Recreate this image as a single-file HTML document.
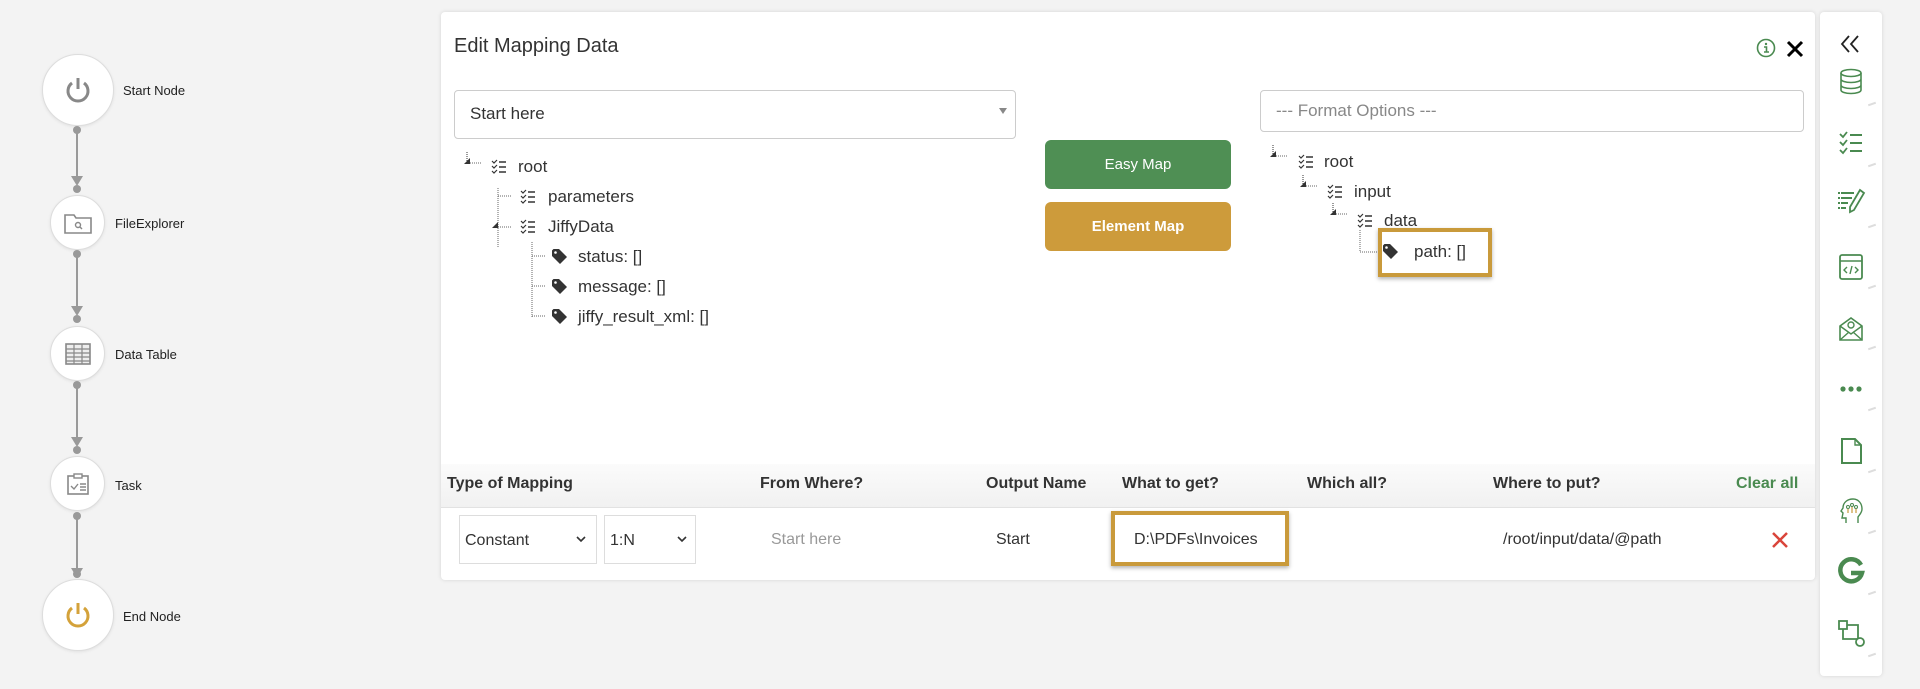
<!DOCTYPE html>
<html><head><meta charset="utf-8"><style>
*{box-sizing:border-box;margin:0;padding:0}
body{width:1920px;height:689px;background:#f3f3f3;font-family:"Liberation Sans",sans-serif;color:#333;position:relative;overflow:hidden}
.a{position:absolute}
.node{position:absolute;border-radius:50%;background:#fff;border:1px solid #ddd;box-shadow:0 1px 3px rgba(0,0,0,.08);display:flex;align-items:center;justify-content:center}
.lbl{position:absolute;font-size:13px;color:#222}
.vl{position:absolute;width:2px;background:#999;left:76px}
.dot{position:absolute;width:8px;height:8px;border-radius:50%;background:#999;left:73px}
.arr{position:absolute;left:71px;width:0;height:0;border-left:6px solid transparent;border-right:6px solid transparent;border-top:10px solid #999}
.modal{position:absolute;left:441px;top:12px;width:1374px;height:568px;background:#fff;border-radius:4px;box-shadow:0 0 4px rgba(0,0,0,.12)}
.t{position:absolute;font-size:17px;color:#333;white-space:nowrap;line-height:20px}
.hd{position:absolute;font-size:16px;font-weight:bold;color:#333;top:475px;white-space:nowrap}
.side{position:absolute;left:1820px;top:12px;width:62px;height:664px;background:#fff;border-radius:4px;box-shadow:0 0 4px rgba(0,0,0,.12)}
.si{position:absolute;left:1836px;width:30px;height:30px}
.sep{position:absolute;left:1868px;width:8px;height:2px;background:#ddd;transform:rotate(-20deg)}
</style></head><body>

<div class="node" style="left:42px;top:54px;width:72px;height:72px"><svg width="30" height="30" viewBox="0 0 30 30"><path d="M9 8 A10 10 0 1 0 21 8" fill="none" stroke="#888" stroke-width="3"/><line x1="15" y1="3" x2="15" y2="14" stroke="#888" stroke-width="3"/></svg></div>
<div class="lbl" style="left:123px;top:83px">Start Node</div>
<div class="dot" style="top:126px"></div><div class="vl" style="top:130px;height:50px"></div><div class="arr" style="top:176px"></div><div class="dot" style="top:185px"></div>
<div class="node" style="left:50px;top:195px;width:55px;height:55px"><svg width="28" height="22" viewBox="0 0 28 22"><path d="M1 3h9l2 3h15v15H1z" fill="none" stroke="#888" stroke-width="1.6"/><circle cx="14" cy="13" r="2.5" fill="none" stroke="#888" stroke-width="1.4"/><line x1="16" y1="15" x2="18" y2="17" stroke="#888" stroke-width="1.4"/></svg></div>
<div class="lbl" style="left:115px;top:216px">FileExplorer</div>
<div class="dot" style="top:250px"></div><div class="vl" style="top:254px;height:56px"></div><div class="arr" style="top:306px"></div><div class="dot" style="top:315px"></div>
<div class="node" style="left:50px;top:326px;width:55px;height:55px"><svg width="26" height="22" viewBox="0 0 26 22"><rect x="1" y="1" width="24" height="20" fill="#eee" stroke="#888" stroke-width="1.6"/><path d="M1 6h24M1 10h24M1 14h24M1 18h24M9 1v20M17 1v20" stroke="#888" stroke-width="1.2"/></svg></div>
<div class="lbl" style="left:115px;top:347px">Data Table</div>
<div class="dot" style="top:381px"></div><div class="vl" style="top:385px;height:56px"></div><div class="arr" style="top:437px"></div><div class="dot" style="top:446px"></div>
<div class="node" style="left:50px;top:456px;width:55px;height:55px"><svg width="24" height="24" viewBox="0 0 24 24"><rect x="2" y="4" width="20" height="18" fill="none" stroke="#888" stroke-width="1.6"/><rect x="8" y="2" width="8" height="4" fill="#fff" stroke="#888" stroke-width="1.4"/><path d="M5 14l3 3 4-5M14 12h6M14 15h6M14 18h6" fill="none" stroke="#888" stroke-width="1.4"/></svg></div>
<div class="lbl" style="left:115px;top:478px">Task</div>
<div class="dot" style="top:512px"></div><div class="vl" style="top:516px;height:56px"></div><div class="arr" style="top:568px"></div><div class="dot" style="top:570px"></div>
<div class="node" style="left:42px;top:579px;width:72px;height:72px"><svg width="30" height="30" viewBox="0 0 30 30"><path d="M9 8 A10 10 0 1 0 21 8" fill="none" stroke="#d4a23a" stroke-width="3"/><line x1="15" y1="3" x2="15" y2="14" stroke="#d4a23a" stroke-width="3"/></svg></div>
<div class="lbl" style="left:123px;top:609px">End Node</div>

<div class="modal"></div>
<div class="t" style="left:454px;top:36px;font-size:20px;color:#333">Edit Mapping Data</div>
<svg class="a" style="left:1756px;top:38px" width="20" height="20" viewBox="0 0 20 20"><circle cx="10" cy="10" r="8.5" fill="none" stroke="#4a8a50" stroke-width="1.6"/><circle cx="10" cy="6" r="1.2" fill="#4a8a50"/><path d="M8 9h2.5v5M8 14h5" stroke="#4a8a50" stroke-width="1.6" fill="none"/></svg>
<svg class="a" style="left:1786px;top:40px" width="18" height="18" viewBox="0 0 18 18"><path d="M2 2L16 16M16 2L2 16" stroke="#000" stroke-width="3"/></svg>

<div class="a" style="left:454px;top:90px;width:562px;height:49px;border:1px solid #ccc;border-radius:4px"></div>
<div class="t" style="left:470px;top:104px">Start here</div>
<div class="a" style="left:999px;top:108px;border-left:4px solid transparent;border-right:4px solid transparent;border-top:6px solid #888"></div>

<div class="a" style="left:1260px;top:90px;width:544px;height:42px;border:1px solid #ccc;border-radius:4px"></div>
<div class="t" style="left:1276px;top:101px;color:#888">--- Format Options ---</div>

<div class="a" style="left:1045px;top:140px;width:186px;height:49px;background:#4f8f54;border-radius:6px;color:#fff;font-size:15px;text-align:center;line-height:49px">Easy Map</div>
<div class="a" style="left:1045px;top:202px;width:186px;height:49px;background:#cd9b3b;border-radius:6px;color:#fff;font-size:15px;font-weight:bold;text-align:center;line-height:49px">Element Map</div>

<svg width="0" height="0" style="position:absolute"><defs>
<g id="lst"><path d="M0 2l2 2 3-3M0 7l2 2 3-3M0 12l2 2 3-3" fill="none" stroke="#333" stroke-width="1.2"/><path d="M7 3h7M7 8h7M7 13h7" stroke="#333" stroke-width="1.5"/></g>
<g id="tag"><path d="M0 1.5V7l8 8 7-7-8-8H1.5z" fill="#333"/><circle cx="3.5" cy="3.5" r="1.3" fill="#fff"/></g>
<g id="exp"><path d="M3 0v11" stroke="#333" stroke-width="1" stroke-dasharray="1 1"/><path d="M0 12l6-6v6z" fill="#333"/><path d="M6 11h12" stroke="#666" stroke-width="1" stroke-dasharray="1 1"/></g>
</defs></svg>

<svg class="a" style="left:460px;top:150px" width="400" height="180">
<use href="#exp" x="4" y="2"/><use href="#lst" x="32" y="9"/>
<path d="M38 38v60M38 46h14" stroke="#666" stroke-dasharray="1 1" fill="none"/>
<use href="#lst" x="61" y="39"/>
<path d="M32 78l6-6v6z" fill="#333"/><path d="M38 77h14" stroke="#666" stroke-dasharray="1 1"/>
<use href="#lst" x="61" y="69"/>
<path d="M72 92v76M72 106h14M72 136h14M72 166h14" stroke="#666" stroke-dasharray="1 1" fill="none"/>
<use href="#tag" x="92" y="99"/><use href="#tag" x="92" y="129"/><use href="#tag" x="92" y="159"/>
</svg>
<div class="t" style="left:518px;top:157px">root</div>
<div class="t" style="left:548px;top:187px">parameters</div>
<div class="t" style="left:548px;top:217px">JiffyData</div>
<div class="t" style="left:578px;top:247px">status: []</div>
<div class="t" style="left:578px;top:277px">message: []</div>
<div class="t" style="left:578px;top:307px">jiffy_result_xml: []</div>

<svg class="a" style="left:1268px;top:144px" width="200" height="130">
<use href="#exp" x="2" y="1"/><use href="#lst" x="31" y="10"/>
<use href="#exp" x="32" y="31"/><use href="#lst" x="60" y="40"/>
<use href="#exp" x="62" y="59"/><use href="#lst" x="90" y="69"/>
<path d="M92 86v22h18" stroke="#666" stroke-dasharray="1 1" fill="none"/>
<use href="#tag" x="115" y="100"/>
</svg>
<div class="t" style="left:1324px;top:152px">root</div>
<div class="t" style="left:1354px;top:182px">input</div>
<div class="t" style="left:1384px;top:211px">data</div>
<div class="a" style="left:1378px;top:228px;width:114px;height:49px;border:4px solid #c99a3b;box-shadow:0 2px 4px rgba(0,0,0,.3)"></div>
<div class="t" style="left:1414px;top:242px">path: []</div>

<div class="a" style="left:441px;top:464px;width:1374px;height:44px;background:linear-gradient(#fbfbfb,#f1f1f1);border-bottom:1px solid #e2e2e2"></div>
<div class="hd" style="left:447px">Type of Mapping</div>
<div class="hd" style="left:760px">From Where?</div>
<div class="hd" style="left:986px">Output Name</div>
<div class="hd" style="left:1122px">What to get?</div>
<div class="hd" style="left:1307px">Which all?</div>
<div class="hd" style="left:1493px">Where to put?</div>
<div class="hd" style="left:1736px;color:#4a8a50">Clear all</div>

<div class="a" style="left:459px;top:515px;width:138px;height:49px;border:1px solid #ddd"></div>
<div class="t" style="left:465px;top:531px;font-size:16px">Constant</div>
<svg class="a" style="left:576px;top:536px" width="10" height="7"><path d="M1 1l4 4 4-4" stroke="#333" stroke-width="1.6" fill="none"/></svg>
<div class="a" style="left:604px;top:515px;width:92px;height:49px;border:1px solid #ddd"></div>
<div class="t" style="left:610px;top:531px;font-size:16px">1:N</div>
<svg class="a" style="left:677px;top:536px" width="10" height="7"><path d="M1 1l4 4 4-4" stroke="#333" stroke-width="1.6" fill="none"/></svg>
<div class="t" style="left:771px;top:530px;font-size:16px;color:#999">Start here</div>
<div class="t" style="left:996px;top:530px;font-size:16px">Start</div>
<div class="a" style="left:1111px;top:511px;width:178px;height:55px;border:4px solid #c99a3b;box-shadow:0 2px 4px rgba(0,0,0,.3)"></div>
<div class="t" style="left:1134px;top:530px;font-size:16px">D:\PDFs\Invoices</div>
<div class="t" style="left:1503px;top:530px;font-size:16px">/root/input/data/@path</div>
<svg class="a" style="left:1771px;top:531px" width="18" height="18"><path d="M2 2L16 16M16 2L2 16" stroke="#d9443a" stroke-width="2.5"/></svg>

<div class="side"></div>
<svg class="a" style="left:1838px;top:34px" width="26" height="20"><path d="M11 2L4 10l7 8M20 2l-7 8 7 8" stroke="#222" stroke-width="1.8" fill="none"/></svg>
<svg class="si" style="top:67px" viewBox="0 0 30 30"><ellipse cx="15" cy="6" rx="10" ry="3.5" fill="none" stroke="#4a8a50" stroke-width="1.6"/><path d="M5 6v17c0 2 4.5 3.5 10 3.5S25 25 25 23V6M5 12c0 2 4.5 3.5 10 3.5S25 14 25 12M5 18c0 2 4.5 3.5 10 3.5S25 20 25 18" fill="none" stroke="#4a8a50" stroke-width="1.6"/></svg>
<div class="sep" style="top:103px"></div>
<svg class="si" style="top:128px" viewBox="0 0 30 30"><path d="M4 6l3 3 4-5M4 14l3 3 4-5M4 22l3 3 4-5" fill="none" stroke="#4a8a50" stroke-width="1.8"/><path d="M14 7h12M14 15h12M14 23h12" stroke="#4a8a50" stroke-width="2"/></svg>
<div class="sep" style="top:164px"></div>
<svg class="si" style="top:187px" viewBox="0 0 30 30"><path d="M2 6h16M2 11h14M2 16h10M2 21h8" stroke="#4a8a50" stroke-width="2" stroke-dasharray="2 1 20"/><path d="M24 3l4 3-10 17-4 2 0-5z" fill="none" stroke="#4a8a50" stroke-width="1.8"/></svg>
<div class="sep" style="top:225px"></div>
<svg class="si" style="top:252px" viewBox="0 0 30 30"><rect x="4" y="3" width="22" height="24" rx="2" fill="none" stroke="#4a8a50" stroke-width="1.8"/><path d="M4 9h22" stroke="#4a8a50" stroke-width="1.5"/><path d="M11 15l-3 3 3 3M19 15l3 3-3 3M16 14l-2 8" fill="none" stroke="#4a8a50" stroke-width="1.4"/></svg>
<div class="sep" style="top:286px"></div>
<svg class="si" style="top:313px" viewBox="0 0 30 30"><path d="M4 13v14h22V13L15 5z" fill="none" stroke="#4a8a50" stroke-width="1.6"/><path d="M4 27l9-8M26 27l-9-8M4 13l11 8 11-8" fill="none" stroke="#4a8a50" stroke-width="1.4"/><circle cx="15" cy="12" r="3" fill="none" stroke="#4a8a50" stroke-width="1.4"/></svg>
<div class="sep" style="top:347px"></div>
<svg class="si" style="top:374px" viewBox="0 0 30 30"><circle cx="7" cy="15" r="2.6" fill="#4a8a50"/><circle cx="15" cy="15" r="2.6" fill="#4a8a50"/><circle cx="23" cy="15" r="2.6" fill="#4a8a50"/></svg>
<div class="sep" style="top:408px"></div>
<svg class="si" style="top:436px" viewBox="0 0 30 30"><path d="M6 3h13l6 6v18H6z" fill="none" stroke="#4a8a50" stroke-width="2"/><path d="M19 3v6h6" fill="none" stroke="#4a8a50" stroke-width="1.4"/></svg>
<div class="sep" style="top:470px"></div>
<svg class="si" style="top:496px" viewBox="0 0 30 30"><path d="M10 27v-5H6l1-5-2-2 2-3C7 6 12 3 17 3c6 0 9 5 9 10 0 4-3 6-4 8v6" fill="none" stroke="#4a8a50" stroke-width="1.4"/><path d="M12 17v-4M16 17v-6M20 17v-4" stroke="#c99a3b" stroke-width="1.2"/><circle cx="12" cy="11" r="1.5" fill="none" stroke="#4a8a50"/><circle cx="16" cy="9" r="1.5" fill="none" stroke="#4a8a50"/><circle cx="20" cy="11" r="1.5" fill="none" stroke="#4a8a50"/></svg>
<div class="sep" style="top:531px"></div>
<svg class="si" style="top:557px" viewBox="0 0 30 30"><path d="M25 8A11 11 0 1 0 26 16H15" fill="none" stroke="#4a8a50" stroke-width="4.5"/></svg>
<div class="sep" style="top:592px"></div>
<svg class="si" style="top:618px" viewBox="0 0 30 30"><rect x="3" y="3" width="8" height="8" fill="none" stroke="#4a8a50" stroke-width="1.8"/><path d="M7 11v10h15M11 7h11v14" fill="none" stroke="#4a8a50" stroke-width="1.8"/><circle cx="24" cy="24" r="4" fill="#fff" stroke="#4a8a50" stroke-width="1.8"/></svg>
<div class="sep" style="top:654px"></div>
</body></html>
